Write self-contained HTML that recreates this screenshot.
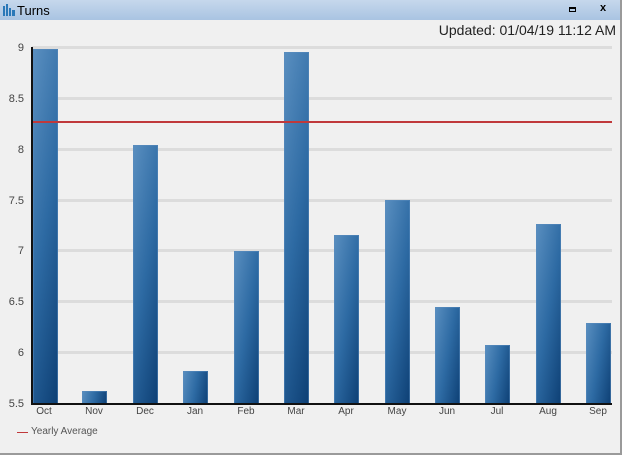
<!DOCTYPE html><html><head><style>
body{margin:0;width:623px;height:457px;background:#fff;font-family:"Liberation Sans",sans-serif;position:relative;overflow:hidden}
.win{position:absolute;left:0;top:0;width:622px;height:455px;background:#f0f0f0;border-right:2px solid #9a9a9a;border-bottom:2px solid #9a9a9a;box-sizing:border-box}
.tb{position:absolute;left:0;top:0;width:620px;height:20px;background:linear-gradient(#c6d8ec,#a9c4e2)}
.g{position:absolute;left:32px;width:580px;height:3px;background:#dcdcdc}
.b{position:absolute;width:25px;background:linear-gradient(100deg,#5a8fc0,#2d6aa3 50%,#0d3f74);box-shadow:inset 0 0 0 1px rgba(90,140,190,.5)}
.yl{position:absolute;left:6px;width:18px;text-align:right;font-size:11px;color:#444}
.xl{position:absolute;top:406px;width:40px;text-align:center;font-size:10px;color:#444}
</style></head><body>
<div class="win">
<div class="tb"></div>
<svg style="position:absolute;left:3px;top:4px" width="13" height="12"><rect x="0" y="2" width="2" height="10" fill="#2a78b8"/><rect x="3" y="0" width="2" height="12" fill="#2a78b8"/><rect x="6" y="4" width="2" height="8" fill="#2a78b8"/><rect x="9" y="6" width="3" height="6" fill="#2a78b8"/></svg>
<div style="position:absolute;left:17px;top:3px;font-size:13px;color:#000">Turns</div>
<div style="position:absolute;left:569px;top:7px;width:7px;height:5px;border:1px solid #000;border-top-width:2px;box-sizing:border-box"></div>
<div style="position:absolute;left:600px;top:2px;font-size:11px;font-weight:bold">x</div>
<div style="position:absolute;right:4px;top:22px;font-size:14px;color:#222">Updated: 01/04/19 11:12 AM</div>
<div class="g" style="top:46px"></div><div class="g" style="top:97px"></div><div class="g" style="top:148px"></div><div class="g" style="top:199px"></div><div class="g" style="top:249px"></div><div class="g" style="top:300px"></div><div class="g" style="top:351px"></div>
<div class="yl" style="top:42px">9</div><div class="yl" style="top:93px">8.5</div><div class="yl" style="top:144px">8</div><div class="yl" style="top:195px">7.5</div><div class="yl" style="top:245px">7</div><div class="yl" style="top:296px">6.5</div><div class="yl" style="top:347px">6</div><div class="yl" style="top:398px">5.5</div>
<div class="b" style="left:33px;top:49px;height:355px"></div>
<div class="b" style="left:82px;top:391px;height:13px"></div>
<div class="b" style="left:133px;top:145px;height:259px"></div>
<div class="b" style="left:183px;top:371px;height:33px"></div>
<div class="b" style="left:234px;top:251px;height:153px"></div>
<div class="b" style="left:284px;top:52px;height:352px"></div>
<div class="b" style="left:334px;top:235px;height:169px"></div>
<div class="b" style="left:385px;top:200px;height:204px"></div>
<div class="b" style="left:435px;top:307px;height:97px"></div>
<div class="b" style="left:485px;top:345px;height:59px"></div>
<div class="b" style="left:536px;top:224px;height:180px"></div>
<div class="b" style="left:586px;top:323px;height:81px"></div>
<div style="position:absolute;left:32px;top:121px;width:580px;height:2px;background:#c0393b"></div>
<div style="position:absolute;left:31px;top:47px;width:2px;height:358px;background:#111"></div>
<div style="position:absolute;left:31px;top:403px;width:581px;height:2px;background:#111"></div>
<div class="xl" style="left:24px">Oct</div><div class="xl" style="left:74px">Nov</div><div class="xl" style="left:125px">Dec</div><div class="xl" style="left:175px">Jan</div><div class="xl" style="left:226px">Feb</div><div class="xl" style="left:276px">Mar</div><div class="xl" style="left:326px">Apr</div><div class="xl" style="left:377px">May</div><div class="xl" style="left:427px">Jun</div><div class="xl" style="left:477px">Jul</div><div class="xl" style="left:528px">Aug</div><div class="xl" style="left:578px">Sep</div>
<div style="position:absolute;left:17px;top:432px;width:11px;height:1px;background:#c0393b"></div>
<div style="position:absolute;left:31px;top:426px;font-size:10px;color:#555">Yearly Average</div>
</div>
</body></html>
